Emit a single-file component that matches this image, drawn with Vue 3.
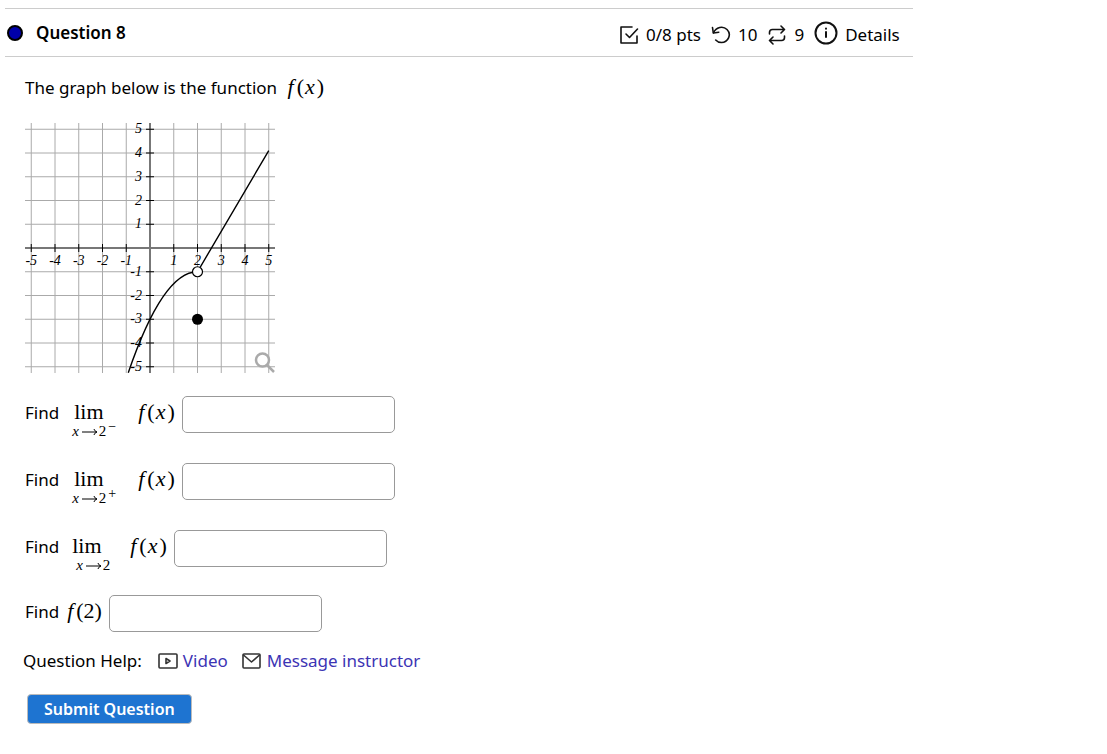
<script setup>
import { ref } from 'vue'

const UNIT = 23.75
const ORIGIN = 125
const px = (x) => ORIGIN + x * UNIT
const py = (y) => ORIGIN - y * UNIT

const ticks = [-5, -4, -3, -2, -1, 1, 2, 3, 4, 5]

// -1 - (x - 2)^2 / 2 on the left, a straight line on the right
const leftStart = -0.915
const curve =
  `M${px(leftStart)} ${py(-5.25)} Q${px((leftStart + 2) / 2)} ${py(-1)} ${px(2)} ${py(-1)}` +
  ` L${px(5)} ${py(4.1)}`

const limits = [
  { id: 'left', side: '−', label: 'Limit as x approaches 2 from the left' },
  { id: 'right', side: '+', label: 'Limit as x approaches 2 from the right' },
  { id: 'both', side: '', label: 'Limit as x approaches 2' },
]
const answers = ref({ left: '', right: '', both: '', value: '' })
</script>

<template>
  <main class="question">
    <header class="bar">
      <h2 class="title"><span class="dot"></span>Question 8</h2>
      <div class="stats">
        <span class="stat">
          <svg class="icon" width="20" height="20" viewBox="0 0 20 20">
            <path d="M13 2H2v16h16v-7" />
            <path d="M7 9l3.5 3.5L18.5 4" />
          </svg>
          0/8 pts
        </span>
        <span class="stat">
          <svg class="icon" width="20" height="20" viewBox="0 0 20 20">
            <path d="M1.5 2.5l.8 5.500 5.500-.8" />
            <path d="M2.5 7.800C5 2 12 .5 16 4.500c5 5 1 13-5.500 13-2.500 0-4.500-1-5.800-2.500" />
          </svg>
          10
        </span>
        <span class="stat">
          <svg class="icon" width="20" height="20" viewBox="0 0 20 20">
            <path d="M14 1l3.500 3.500L14 8M17 4.500H5.500c-2 0-3 1-3 3V9" />
            <path d="M6 19l-3.500-3.500L6 12M3 15.500h11.500c2 0 3-1 3-3V11" />
          </svg>
          9
        </span>
        <a class="stat details" href="#details">
          <svg class="icon info" width="24" height="24" viewBox="0 0 24 24">
            <circle cx="12" cy="12" r="10.5" />
            <path d="M12 11v5M12 7.500v.2" />
          </svg>
          Details
        </a>
      </div>
    </header>

    <section class="body">
      <p class="prompt">
        The graph below is the function
        <span class="math"><i class="fn">f</i>(<i>x</i>)</span>
      </p>

      <svg class="graph" width="250" height="250" viewBox="0 0 250 250" role="img" aria-label="Graph of f">
        <g class="grid">
          <path v-for="t in ticks" :key="t" :d="`M${px(t)} 0V250M0 ${py(t)}H250`" />
        </g>
        <path class="axis" d="M125 0V250M0 125H250" />
        <g class="ticks">
          <path v-for="t in ticks" :key="t" :d="`M${px(t)} 121V129M121 ${py(t)}H129`" />
        </g>
        <g class="numbers">
          <text v-for="t in ticks" :key="'x' + t" :x="px(t)" y="142" text-anchor="middle">{{ t }}</text>
          <text v-for="t in ticks" :key="'y' + t" x="117" :y="py(t) + 4" text-anchor="end">{{ t }}</text>
        </g>
        <path class="curve" :d="curve" />
        <circle class="hole" :cx="px(2)" :cy="py(-1)" r="5" />
        <circle class="point" :cx="px(2)" :cy="py(-3)" r="5.5" />
        <g class="lens">
          <circle cx="237.5" cy="237" r="6.5" />
          <path d="M242 242l7 7" />
        </g>
      </svg>

      <div v-for="l in limits" :key="l.id" class="row">
        <label :for="l.id" :title="l.label">
          Find
          <span class="math limit" :class="{ short: !l.side }">
            <span>lim</span>
            <span class="under"><i>x</i><svg class="arrow" width="16" height="8" viewBox="0 0 16 8"><path d="M0 4h15M12 1c.5 1.500 1.500 2.500 3 3-1.500.5-2.500 1.500-3 3" /></svg>2<sup v-if="l.side">{{ l.side }}</sup></span>
          </span>
          <span class="math"><i class="fn">f</i>(<i>x</i>)</span>
        </label>
        <input :id="l.id" v-model="answers[l.id]" type="text" autocomplete="off" />
      </div>
      <div class="row last">
        <label for="value">Find <span class="math value"><i class="fn">f</i>(2)</span></label>
        <input id="value" v-model="answers.value" type="text" autocomplete="off" />
      </div>

      <div class="help">
        <span>Question Help:</span>
        <a href="#video">
          <svg class="icon" width="20" height="16" viewBox="0 0 20 16">
            <rect x="1" y="1" width="18" height="14" rx="1" />
            <path d="M8 5.500l4 2.500-4 2.500z" />
          </svg>
          Video
        </a>
        <a href="#message">
          <svg class="icon" width="20" height="16" viewBox="0 0 20 16">
            <rect x="1" y="1" width="17" height="14" rx="1" />
            <path d="M1.500 2l8 7 8-7" />
          </svg>
          Message instructor
        </a>
      </div>

      <button class="submit" type="button">Submit Question</button>
    </section>
  </main>
</template>

<style>
body {
  background: #fff;
}
</style>

<style scoped>
.question {
  box-sizing: border-box;
  width: 82%;
  margin: 8px 0 0 5px;
  color: #000;
  font: 17px/24px "Trebuchet MS", "Noto Sans", sans-serif;
}
.bar {
  display: flex;
  align-items: center;
  justify-content: space-between;
  height: 47px;
  border-top: 1px solid #ccc;
  border-bottom: 1px solid #ccc;
}
.title {
  display: flex;
  align-items: center;
  gap: 13px;
  margin: 0 0 0 2px;
  font-size: 17px;
  font-weight: 600;
}
.dot {
  box-sizing: border-box;
  width: 16px;
  height: 16px;
  border: 2px solid #000;
  border-radius: 50%;
  background: #00a;
}
.stats {
  display: flex;
  align-items: center;
  gap: 10px;
  margin: 4px 13px 0 0;
}
.stat {
  display: flex;
  align-items: center;
  gap: 7px;
}
.details {
  color: #000;
  text-decoration: none;
}
.icon {
  fill: none;
  stroke: #111;
  stroke-width: 1.6;
  stroke-linecap: round;
  stroke-linejoin: round;
}
.info {
  margin-bottom: 4px;
  stroke-width: 2;
}
.body {
  display: flex;
  flex-direction: column;
  align-items: flex-start;
  padding-left: 20px;
}
.prompt {
  margin: 18px 0 23px;
}
.prompt .math {
  margin-left: 8px;
}
.math {
  font: 22px/24px "Liberation Serif", serif;
}
.math i {
  margin: 0 2px 0 1px;
}
.math .fn {
  margin: 0 3px 0 0;
}
.prompt .math {
  margin-left: 6px;
}
.graph {
  display: block;
}
.grid {
  fill: none;
  stroke: #aaa;
  stroke-width: 1;
}
.axis {
  stroke: #777;
  stroke-width: 2;
}
.ticks {
  stroke: #000;
  stroke-width: 1;
}
.numbers {
  font: italic 14px "Liberation Serif", serif;
}
.curve {
  fill: none;
  stroke: #000;
  stroke-width: 1.4;
}
.hole {
  fill: #fff;
  stroke: #000;
  stroke-width: 1.2;
}
.lens {
  fill: none;
  stroke: #aaa;
  stroke-width: 2.5;
}
.row {
  display: flex;
  align-items: center;
  gap: 7px;
  height: 37px;
  margin-bottom: 30px;
}
.graph + .row {
  margin-top: 23px;
}
.row label {
  display: flex;
  align-items: baseline;
  padding-bottom: 4px;
}
.limit {
  position: relative;
  width: 64px;
  margin-left: 15px;
}
.limit.short {
  width: 58px;
  margin-left: 13px;
}
.under {
  position: absolute;
  top: 23px;
  left: -3px;
  display: flex;
  align-items: center;
  font-size: 15px;
  line-height: 16px;
}
.short .under {
  left: 3px;
}
.arrow {
  margin: 2px 1px 0;
  fill: none;
  stroke: #000;
  stroke-width: 1;
}
.under sup {
  align-self: flex-start;
  margin: -4px 0 0 2px;
  font-size: 14px;
  line-height: 16px;
}
.value {
  margin-left: 8px;
}
.last {
  margin: -2px 0 0;
}
input {
  box-sizing: border-box;
  width: 213px;
  height: 37px;
  padding: 4px 8px;
  border: 1px solid #999;
  border-radius: 5px;
  background: #fff;
  font: inherit;
}
.help {
  display: flex;
  align-items: center;
  gap: 14px;
  margin: 17px 0 0 -2px;
}
.help span {
  margin-right: 2px;
}
.help a {
  display: flex;
  align-items: center;
  gap: 5px;
  color: #3c34b4;
  text-decoration: none;
}
.help .icon {
  stroke: #333;
}
.submit {
  height: 30px;
  margin: 21px 0 0 2px;
  padding: 0 16px;
  border: 1px solid #bbb;
  border-radius: 4px;
  background: #1e74d1;
  color: #fff;
  font: 600 16px/24px "Trebuchet MS", "Noto Sans", sans-serif;
}
</style>
